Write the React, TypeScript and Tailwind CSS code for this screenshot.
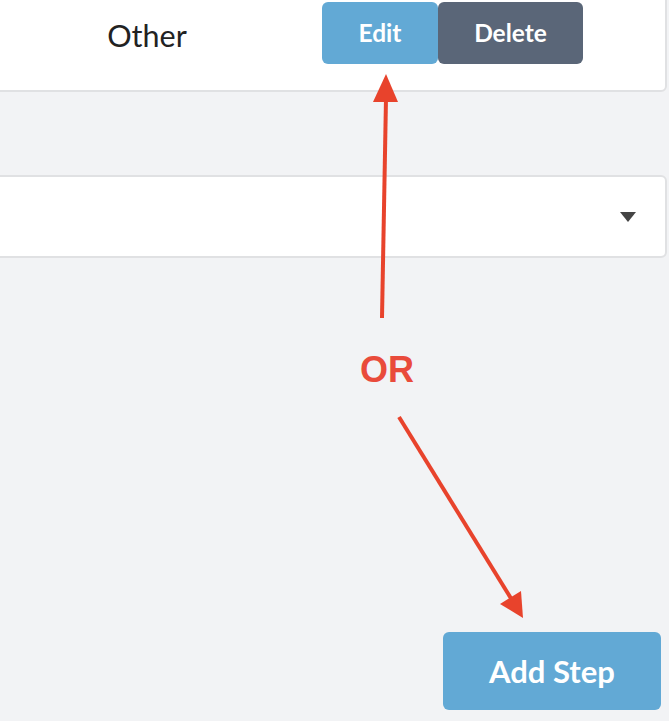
export default function App() {
  return (
    <div
      className="relative w-[669px] h-[721px] overflow-hidden bg-[#f2f3f5]"
      style={{ fontFamily: 'Lato, "Noto Sans", sans-serif' }}
    >
      {/* step row */}
      <div className="-ml-4 -mt-2 mr-[2px] h-[100px] bg-white border-2 border-[#e0e1e3] rounded-md flex">
        <div className="w-[322px] pt-[6px] text-center">
          <span className="text-[30.5px] leading-[70px] text-[#222]">Other</span>
        </div>
        <div className="ml-[14px] pt-[8px] flex">
          <button className="w-[116px] h-[62px] rounded-md bg-[#62a9d5] text-white font-bold text-[24.5px]">
            Edit
          </button>
          <button className="w-[145px] h-[62px] rounded-md bg-[#5a6678] text-white font-bold text-[24.5px]">
            Delete
          </button>
        </div>
      </div>

      {/* step type select */}
      <div className="-ml-4 mt-[83px] mr-[2px] h-[83px] bg-white border-2 border-[#e0e1e3] rounded-md flex items-center justify-end pr-[29px]">
        <svg width="16" height="10" viewBox="0 0 16 10">
          <polygon points="0,0 16,0 8,10" fill="#444" />
        </svg>
      </div>

      <div className="flex justify-end mt-[374px] pr-2">
        <button className="w-[218px] h-[78px] rounded-md bg-[#62a9d5] text-white font-bold text-[31px]">
          Add Step
        </button>
      </div>

      {/* annotation */}
      <svg className="absolute inset-0 pointer-events-none" width="669" height="721">
        <line x1="382" y1="318" x2="386" y2="98" stroke="#e8432c" strokeWidth="4" />
        <polygon points="386,74 373,102 398,102" fill="#e8432c" />
        <line x1="399" y1="417" x2="512" y2="600" stroke="#e8432c" strokeWidth="4" />
        <polygon points="523,618 500,604 521,591" fill="#e8432c" />
      </svg>
      <div
        className="absolute left-[360px] top-[350px] text-[36px] font-bold text-[#e94b3b] leading-[40px]"
        style={{ fontFamily: '"Liberation Sans", Arial, sans-serif' }}
      >
        OR
      </div>
    </div>
  );
}
